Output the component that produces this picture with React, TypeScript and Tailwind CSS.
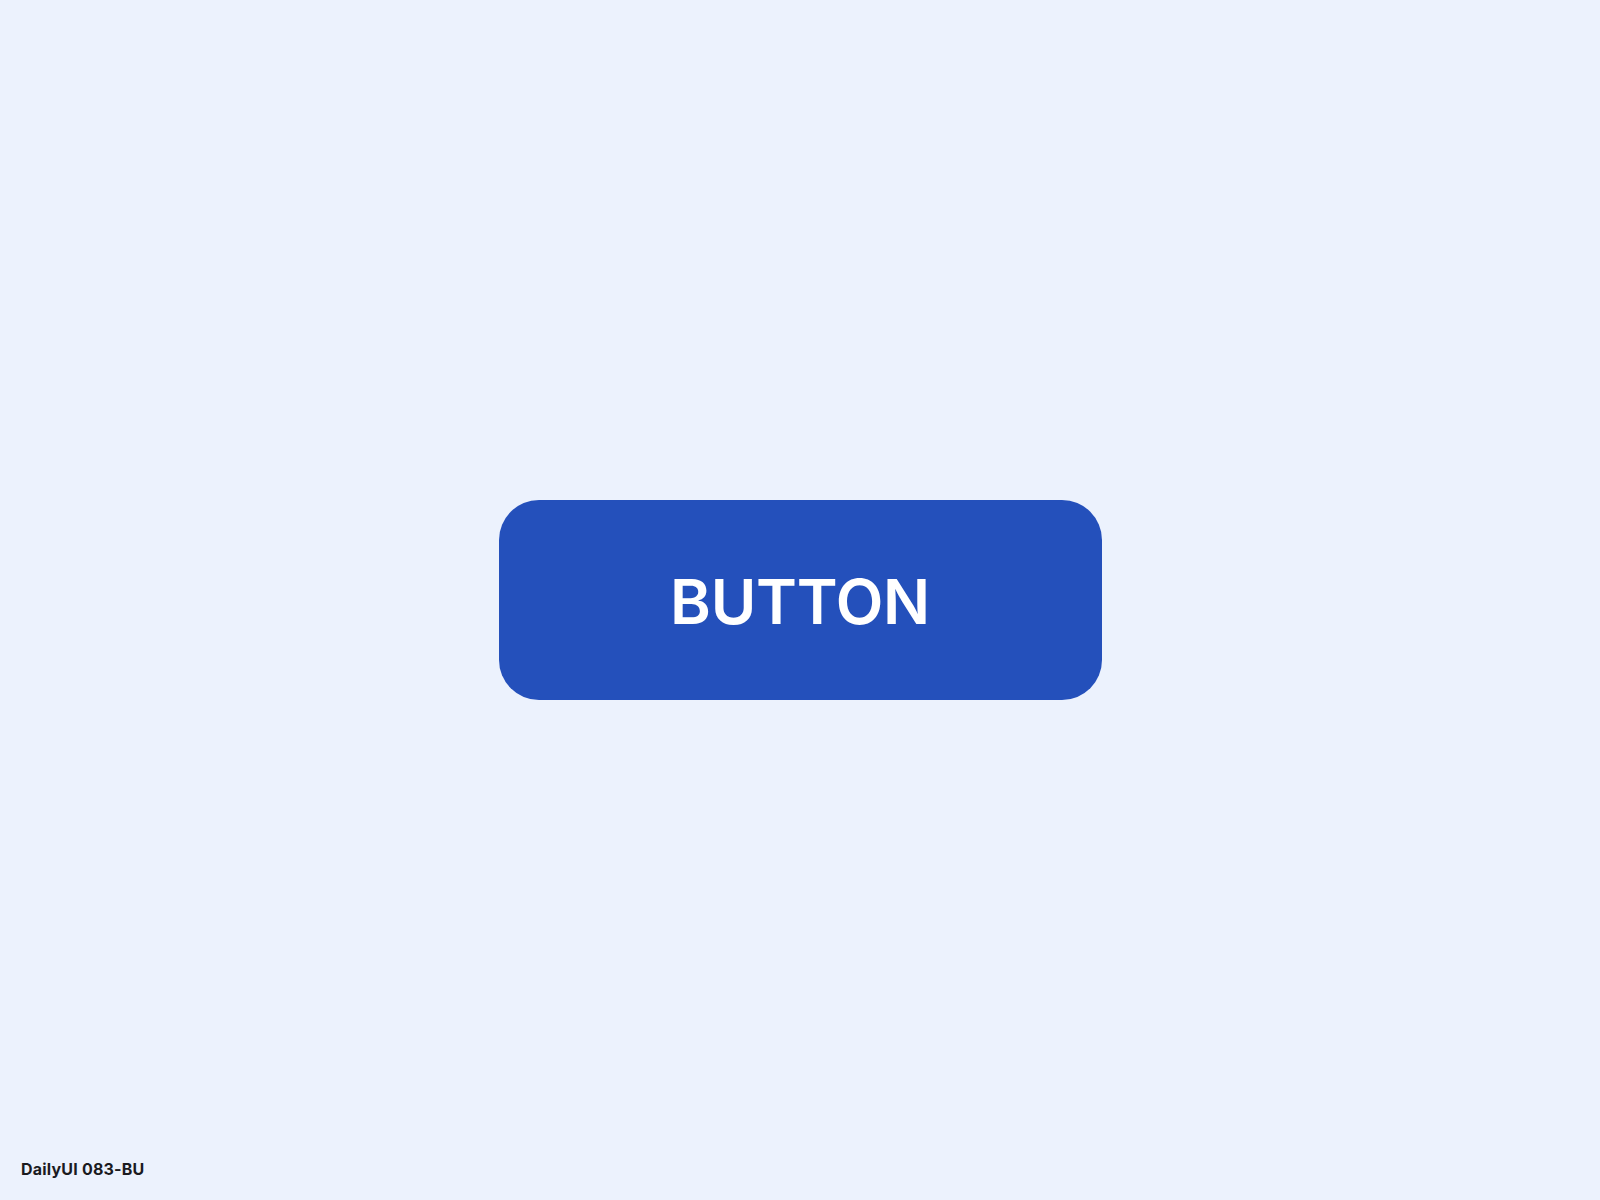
// Daily UI 083: a single primary button on a pale blue canvas.
export default function App() {
  return (
    <div
      className="flex h-[1200px] w-full flex-col bg-[#ecf2fd]"
      style={{ fontFamily: "Inter, 'Noto Sans', sans-serif" }}
    >
      <main className="flex flex-1 items-center justify-center pt-[40px]">
        <button
          type="button"
          className="flex h-[200px] w-[603px] items-center justify-center rounded-[40px] bg-[#2450bb] pt-[4px] text-[62px] font-semibold leading-none tracking-[-0.2px] text-white"
        >
          BUTTON
        </button>
      </main>
      <footer className="flex h-[40px] items-start px-[21px]">
        <span className="-mt-[1px] text-[16px] font-bold leading-[20px] tracking-[0.2px] text-[#1b1b1f]">
          DailyUI 083-BU
        </span>
      </footer>
    </div>
  );
}
